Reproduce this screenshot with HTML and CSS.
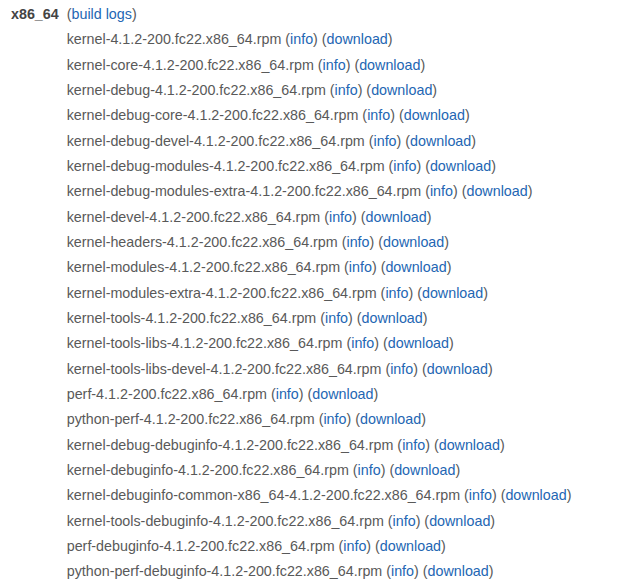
FILE: index.html
```html
<!DOCTYPE html>
<html lang="en">
<head>
  <meta charset="UTF-8" />
  <title>kernel-4.1.2-200.fc22 | Build Info</title>
  <link rel="stylesheet" href="styles.css">
</head>
<body>
  <table class="rpms">
    <tr>
      <th>x86_64</th>
      <td>(<a href="#">build logs</a>)</td>
    </tr>
    <tr><th></th><td>kernel-4.1.2-200.fc22.x86_64.rpm (<a href="#">info</a>) (<a href="#">download</a>)</td></tr>
    <tr><th></th><td>kernel-core-4.1.2-200.fc22.x86_64.rpm (<a href="#">info</a>) (<a href="#">download</a>)</td></tr>
    <tr><th></th><td>kernel-debug-4.1.2-200.fc22.x86_64.rpm (<a href="#">info</a>) (<a href="#">download</a>)</td></tr>
    <tr><th></th><td>kernel-debug-core-4.1.2-200.fc22.x86_64.rpm (<a href="#">info</a>) (<a href="#">download</a>)</td></tr>
    <tr><th></th><td>kernel-debug-devel-4.1.2-200.fc22.x86_64.rpm (<a href="#">info</a>) (<a href="#">download</a>)</td></tr>
    <tr><th></th><td>kernel-debug-modules-4.1.2-200.fc22.x86_64.rpm (<a href="#">info</a>) (<a href="#">download</a>)</td></tr>
    <tr><th></th><td>kernel-debug-modules-extra-4.1.2-200.fc22.x86_64.rpm (<a href="#">info</a>) (<a href="#">download</a>)</td></tr>
    <tr><th></th><td>kernel-devel-4.1.2-200.fc22.x86_64.rpm (<a href="#">info</a>) (<a href="#">download</a>)</td></tr>
    <tr><th></th><td>kernel-headers-4.1.2-200.fc22.x86_64.rpm (<a href="#">info</a>) (<a href="#">download</a>)</td></tr>
    <tr><th></th><td>kernel-modules-4.1.2-200.fc22.x86_64.rpm (<a href="#">info</a>) (<a href="#">download</a>)</td></tr>
    <tr><th></th><td>kernel-modules-extra-4.1.2-200.fc22.x86_64.rpm (<a href="#">info</a>) (<a href="#">download</a>)</td></tr>
    <tr><th></th><td>kernel-tools-4.1.2-200.fc22.x86_64.rpm (<a href="#">info</a>) (<a href="#">download</a>)</td></tr>
    <tr><th></th><td>kernel-tools-libs-4.1.2-200.fc22.x86_64.rpm (<a href="#">info</a>) (<a href="#">download</a>)</td></tr>
    <tr><th></th><td>kernel-tools-libs-devel-4.1.2-200.fc22.x86_64.rpm (<a href="#">info</a>) (<a href="#">download</a>)</td></tr>
    <tr><th></th><td>perf-4.1.2-200.fc22.x86_64.rpm (<a href="#">info</a>) (<a href="#">download</a>)</td></tr>
    <tr><th></th><td>python-perf-4.1.2-200.fc22.x86_64.rpm (<a href="#">info</a>) (<a href="#">download</a>)</td></tr>
    <tr><th></th><td>kernel-debug-debuginfo-4.1.2-200.fc22.x86_64.rpm (<a href="#">info</a>) (<a href="#">download</a>)</td></tr>
    <tr><th></th><td>kernel-debuginfo-4.1.2-200.fc22.x86_64.rpm (<a href="#">info</a>) (<a href="#">download</a>)</td></tr>
    <tr><th></th><td>kernel-debuginfo-common-x86_64-4.1.2-200.fc22.x86_64.rpm (<a href="#">info</a>) (<a href="#">download</a>)</td></tr>
    <tr><th></th><td>kernel-tools-debuginfo-4.1.2-200.fc22.x86_64.rpm (<a href="#">info</a>) (<a href="#">download</a>)</td></tr>
    <tr><th></th><td>perf-debuginfo-4.1.2-200.fc22.x86_64.rpm (<a href="#">info</a>) (<a href="#">download</a>)</td></tr>
    <tr><th></th><td>python-perf-debuginfo-4.1.2-200.fc22.x86_64.rpm (<a href="#">info</a>) (<a href="#">download</a>)</td></tr>
  </table>
</body>
</html>
```

FILE: styles.css
```css
body {
  font-family: 'Liberation Sans', Arial, sans-serif;
  font-size: 14.3px;
  color: #595959;
  background-color: #ffffff;
  margin: 0;
  padding: 2px 0 0 0;
}

a {
  color: #2366b3;
  text-decoration: none;
}

table.rpms {
  border-collapse: collapse;
}

table.rpms th {
  text-align: left;
  vertical-align: top;
  font-weight: bold;
  color: #444444;
  padding: 0 8px 0 11px;
  width: 46px;
  line-height: 25.33px;
}

table.rpms td {
  padding: 0;
  line-height: 25.33px;
}
```
